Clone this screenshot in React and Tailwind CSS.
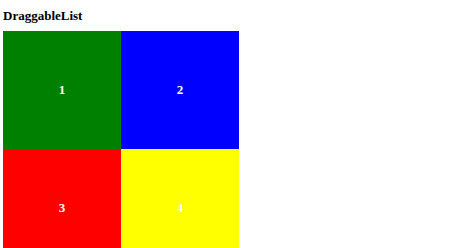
import React from "react";

const items = [
  { id: 1, color: "bg-[#008000]" },
  { id: 2, color: "bg-[#0000ff]" },
  { id: 3, color: "bg-[#ff0000]" },
  { id: 4, color: "bg-[#ffff00]" },
];

const App = () => {
  return (
    <div
      className="bg-white min-h-[248px] px-[3px] pt-[8px]"
      style={{ fontFamily: '"Liberation Serif", "Times New Roman", serif' }}
    >
      <h2 className="text-[13px] leading-[16px] font-bold text-black mb-[7px]">
        DraggableList
      </h2>

      <div className="grid grid-cols-[118px_118px] w-[237px]">
        {items.map((item) => (
          <div
            key={item.id}
            className={`${item.color} h-[118px] flex items-center justify-center text-white text-[13px] font-bold select-none`}
          >
            {item.id}
          </div>
        ))}
      </div>
    </div>
  );
};

export default App;
